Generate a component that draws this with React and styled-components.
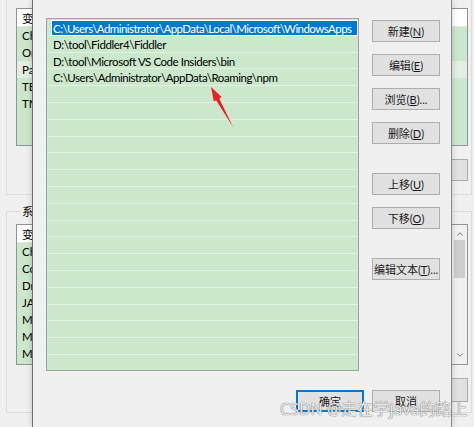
import styled, { createGlobalStyle } from "styled-components";
import { ChevronUp, ChevronDown } from "lucide-react";

const GlobalStyle = createGlobalStyle`
  html, body {
    margin: 0;
    padding: 0;
    background: #f0f0f0;
  }
  body {
    font-family: Lato, "Noto Sans CJK SC", sans-serif;
    font-size: 12px;
    color: #000;
  }
  * { box-sizing: border-box; }
`;

const paths = [
  "D:\\tool\\Fiddler4\\Fiddler",
  "D:\\tool\\Microsoft VS Code Insiders\\bin",
  "C:\\Users\\Administrator\\AppData\\Roaming\\npm",
];

const userVars = ["ChocolateyLastPathUpdate", "OneDrive", "Path", "TEMP", "TMP", "", ""];
const sysVars = ["ChocolateyInstall", "ComSpec", "DriverData", "JAVA_HOME", "MAVEN_HOME", "MYSQL_HOME", "M2_HOME"];

function Label({ text, hot, tail }) {
  // 括号里的字母带下划线
  return (
    <span>
      {text}(<u>{hot}</u>){tail}
    </span>
  );
}

function App() {
  const rows = Array.from({ length: 21 }, (_, i) => paths[i - 1] || "");

  return (
    <Desktop>
      <GlobalStyle />

      <BackWindow>
        <UserGroup>
          <VarList $height={138}>
            <VarBody>
              <VarHeader>变量</VarHeader>
              {userVars.map((v, i) => (
                <VarRow key={i} $active={v === "Path"}>{v}</VarRow>
              ))}
            </VarBody>
          </VarList>
          <BackButtons>
            <BackButton>新建(N)...</BackButton>
            <BackButton>编辑(E)...</BackButton>
            <BackButton>删除(D)</BackButton>
          </BackButtons>
        </UserGroup>

        <SysGroup>
          <legend>系统变量(S)</legend>
          <VarList $height={141}>
            <VarBody>
              <VarHeader>变量</VarHeader>
              {sysVars.map((v, i) => (
                <VarRow key={i}>{v}</VarRow>
              ))}
            </VarBody>
            <ScrollBar>
              <ChevronUp size={10} strokeWidth={2} />
              <Thumb />
              <ChevronDown size={10} strokeWidth={2} />
            </ScrollBar>
          </VarList>
          <BackButtons>
            <BackButton $tall>新建(W)...</BackButton>
            <BackButton $tall>编辑(I)...</BackButton>
            <BackButton $tall>删除(L)</BackButton>
          </BackButtons>
        </SysGroup>
      </BackWindow>

      <Dialog>
        <Main>
          <PathList>
            {rows.map((p, i) =>
              i === 0 ? (
                <PathRow key={i} $edit>
                  <EditBox>
                    <Selected>C:\Users\Administrator\AppData\Local\Microsoft\WindowsApps</Selected>
                  </EditBox>
                </PathRow>
              ) : (
                <PathRow key={i}>{p}</PathRow>
              )
            )}
          </PathList>

          <ButtonCol>
            <Button $top={2}><Label text="新建" hot="N" /></Button>
            <Button $top={12}><Label text="编辑" hot="E" /></Button>
            <Button $top={12}><Label text="浏览" hot="B" tail="..." /></Button>
            <Button $top={12}><Label text="删除" hot="D" /></Button>
            <Button $top={29}><Label text="上移" hot="U" /></Button>
            <Button $top={12}><Label text="下移" hot="O" /></Button>
            <Button $top={29}><Label text="编辑文本" hot="T" tail="..." /></Button>
          </ButtonCol>
        </Main>

        <BottomBar>
          <Button $primary>确定</Button>
          <Button>取消</Button>
        </BottomBar>
      </Dialog>

      <Arrow viewBox="0 0 32 46" width="32" height="46">
        <polygon points="6,3 16.6,13.1 14.3,14.4 28,43 11.1,16.2 8.8,17.5" fill="#e8202a" />
      </Arrow>

      <Watermark>CSDN @走在学java的路上</Watermark>
    </Desktop>
  );
}

const Desktop = styled.div`
  position: relative;
  width: 474px;
  height: 427px;
  overflow: hidden;
  background: #f0f0f0;
`;

const BackWindow = styled.div`
  display: flex;
  flex-direction: column;
  width: 474px;
  height: 427px;
  padding: 0 2px 0 6px;
`;

const UserGroup = styled.div`
  display: flex;
  flex-direction: column;
  height: 195px;
  border: 1px solid #dcdcdc;
  border-top: none;
  padding: 8px 3px 0 9px;
`;

const SysGroup = styled.fieldset`
  display: flex;
  flex-direction: column;
  margin: 8px 0 0;
  height: 210px;
  border: 1px solid #dcdcdc;
  padding: 5px 3px 0 9px;

  legend {
    padding: 0 1px;
    margin-left: 5px;
    line-height: 16px;
    font-family: "Noto Sans CJK SC", sans-serif;
    font-size: 11.5px;
  }
`;

const VarList = styled.div`
  display: flex;
  height: ${(p) => p.$height}px;
  flex: 0 0 auto;
  border: 1px solid #8f949c;
  background: #cce8cc;
  overflow: hidden;
`;

const VarBody = styled.div`
  flex: 1;
`;

const VarHeader = styled.div`
  height: 18px;
  line-height: 18px;
  padding-left: 5px;
  background: #fff;
  border-bottom: 1px solid #e5e5e5;
  font-family: "Noto Sans CJK SC", sans-serif;
  font-size: 11.5px;
`;

const VarRow = styled.div`
  height: 17px;
  line-height: 17px;
  padding-left: 5px;
  font-size: 11.5px;
  background: ${(p) => (p.$active ? "#e2efe2" : "transparent")};
  white-space: nowrap;
`;

const ScrollBar = styled.div`
  flex: 0 0 15px;
  display: flex;
  flex-direction: column;
  align-items: center;
  justify-content: space-between;
  padding: 4px 0;
  background: #f0f0f0;
  color: #606060;
`;

const Thumb = styled.div`
  width: 11px;
  flex: 0 0 38px;
  margin-bottom: auto;
  margin-top: 1px;
  background: #cdcdcd;
`;

const BackButtons = styled.div`
  display: flex;
  justify-content: flex-end;
  gap: 8px;
  margin-top: 13px;
`;

const BackButton = styled.div`
  width: 75px;
  height: ${(p) => (p.$tall ? 24 : 22)}px;
  display: flex;
  align-items: center;
  justify-content: center;
  background: #e1e1e1;
  border: 1px solid #adadad;
  font-size: 11px;
`;

const Dialog = styled.div`
  position: absolute;
  left: 32px;
  top: 0;
  width: 420px;
  height: 427px;
  display: flex;
  flex-direction: column;
  padding: 18px 11px 0 13px;
  background: #f0f0f0;
  border-left: 1px solid #6e6e6e;
  border-right: 1px solid #8a8a8a;
  box-shadow: 0 0 6px rgba(0, 0, 0, 0.2);
`;

const Main = styled.div`
  display: flex;
  gap: 13px;
`;

const PathList = styled.div`
  flex: 0 0 313px;
  height: 353px;
  border: 1px solid #a2a2a2;
  background: #cce8cc;
  overflow: hidden;
`;

const PathRow = styled.div`
  height: 16.8px;
  padding: ${(p) => (p.$edit ? "1px 0 0 4px" : "0 0 0 6px")};
  border-bottom: 1px solid #e4f2e4;
  line-height: 18px;
  font-size: 11.5px;
  letter-spacing: -0.45px;
  white-space: nowrap;
`;

const EditBox = styled.div`
  height: 16px;
  padding: 1px;
  background: #fff;
`;

const Selected = styled.div`
  height: 14px;
  line-height: 15px;
  padding-left: 1px;
  background: #0078d7;
  color: #fff;
  letter-spacing: -0.55px;
  overflow: hidden;
`;

const ButtonCol = styled.div`
  display: flex;
  flex-direction: column;
  width: 68px;
`;

const Button = styled.div`
  width: 68px;
  height: 22px;
  margin-top: ${(p) => p.$top || 0}px;
  display: flex;
  align-items: center;
  justify-content: center;
  background: #e1e1e1;
  border: 1px solid ${(p) => (p.$primary ? "#0078d7" : "#adadad")};
  box-shadow: ${(p) => (p.$primary ? "inset 0 0 0 1px #0078d7" : "none")};
  font-size: 11px;
  color: #1a1a1a;
  white-space: nowrap;

  u {
    text-underline-offset: 1px;
  }
`;

const BottomBar = styled.div`
  display: flex;
  justify-content: flex-end;
  gap: 8px;
  margin-top: 19px;
`;

const Arrow = styled.svg`
  position: absolute;
  left: 205px;
  top: 84px;
`;

const Watermark = styled.div`
  position: absolute;
  left: 280px;
  top: 399px;
  font-family: "Noto Sans", "Noto Sans CJK SC", sans-serif;
  font-size: 16px;
  line-height: 20px;
  color: rgba(250, 250, 250, 0.9);
  text-shadow: 0 0 1px #666, 0 0 1px #888;
  white-space: nowrap;
`;

export default App;
